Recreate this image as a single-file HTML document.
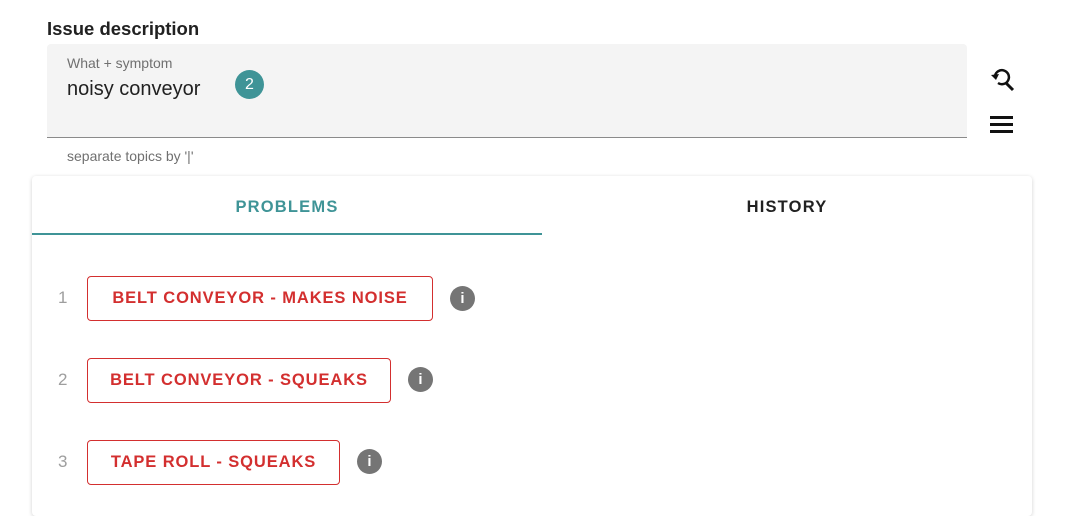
<!DOCTYPE html>
<html><head><style>
body{margin:0;width:1068px;height:500px;background:#fff;font-family:"Liberation Sans",sans-serif;position:relative;overflow:hidden}
.a{position:absolute}
.btn{position:absolute;left:87px;height:43px;border:1px solid #d32f2f;border-radius:4px;color:#d32f2f;font-size:16.5px;letter-spacing:0.9px;font-weight:bold;line-height:43px;text-align:center;box-sizing:content-box}
.num{position:absolute;left:58px;color:#9e9e9e;font-size:17px}
.info{position:absolute;width:25px;height:25px;border-radius:50%;background:#757575;color:#fff;font-weight:bold;font-size:15px;text-align:center;line-height:25px}
</style></head><body>
<div class="a" style="left:47px;top:18px;font-size:18.5px;font-weight:bold;color:#212121">Issue description</div>
<div class="a" style="left:47px;top:44px;width:920px;height:93px;background:#f4f4f4;border-radius:4px 4px 0 0;border-bottom:1px solid #8a8a8a"></div>
<div class="a" style="left:67px;top:55px;font-size:14px;color:#707070">What + symptom</div>
<div class="a" style="left:67px;top:78px;font-size:20px;color:#212121">noisy conveyor</div>
<div class="a" style="left:235px;top:70px;width:29px;height:29px;border-radius:50%;background:#3f9497;color:#fff;font-size:16px;text-align:center;line-height:29px">2</div>
<div class="a" style="left:67px;top:148px;font-size:14px;color:#707070">separate topics by '|'</div>
<svg class="a" style="left:988px;top:65px" width="28" height="28" viewBox="0 0 28 28"><path d="M7 11 A7 7 0 1 1 10 18" fill="none" stroke="#111" stroke-width="2.5"/><path d="M3 10 L8 15 L11 9 Z" fill="#111"/><path d="M18 18 L25 25" stroke="#111" stroke-width="3"/></svg>
<div class="a" style="left:990px;top:116px;width:23px;height:3px;background:#111;box-shadow:0 7px 0 #111,0 14px 0 #111"></div>
<div class="a" style="left:32px;top:176px;width:1000px;height:340px;border-radius:4px;box-shadow:0 1px 4px rgba(0,0,0,.18)"></div>
<div class="a" style="left:32px;top:198px;width:510px;text-align:center;font-size:16.5px;letter-spacing:1.2px;color:#3f9497;font-weight:bold">PROBLEMS</div>
<div class="a" style="left:542px;top:198px;width:490px;text-align:center;font-size:16.5px;letter-spacing:1.2px;color:#212121;font-weight:bold">HISTORY</div>
<div class="a" style="left:32px;top:233px;width:510px;height:2px;background:#3f9497"></div>
<div class="num" style="top:288px">1</div><div class="btn" style="top:276px;width:344px">BELT CONVEYOR - MAKES NOISE</div><div class="info" style="left:450px;top:286px">i</div>
<div class="num" style="top:370px">2</div><div class="btn" style="top:358px;width:302px">BELT CONVEYOR - SQUEAKS</div><div class="info" style="left:408px;top:367px">i</div>
<div class="num" style="top:452px">3</div><div class="btn" style="top:440px;width:251px">TAPE ROLL - SQUEAKS</div><div class="info" style="left:357px;top:449px">i</div>
</body></html>
